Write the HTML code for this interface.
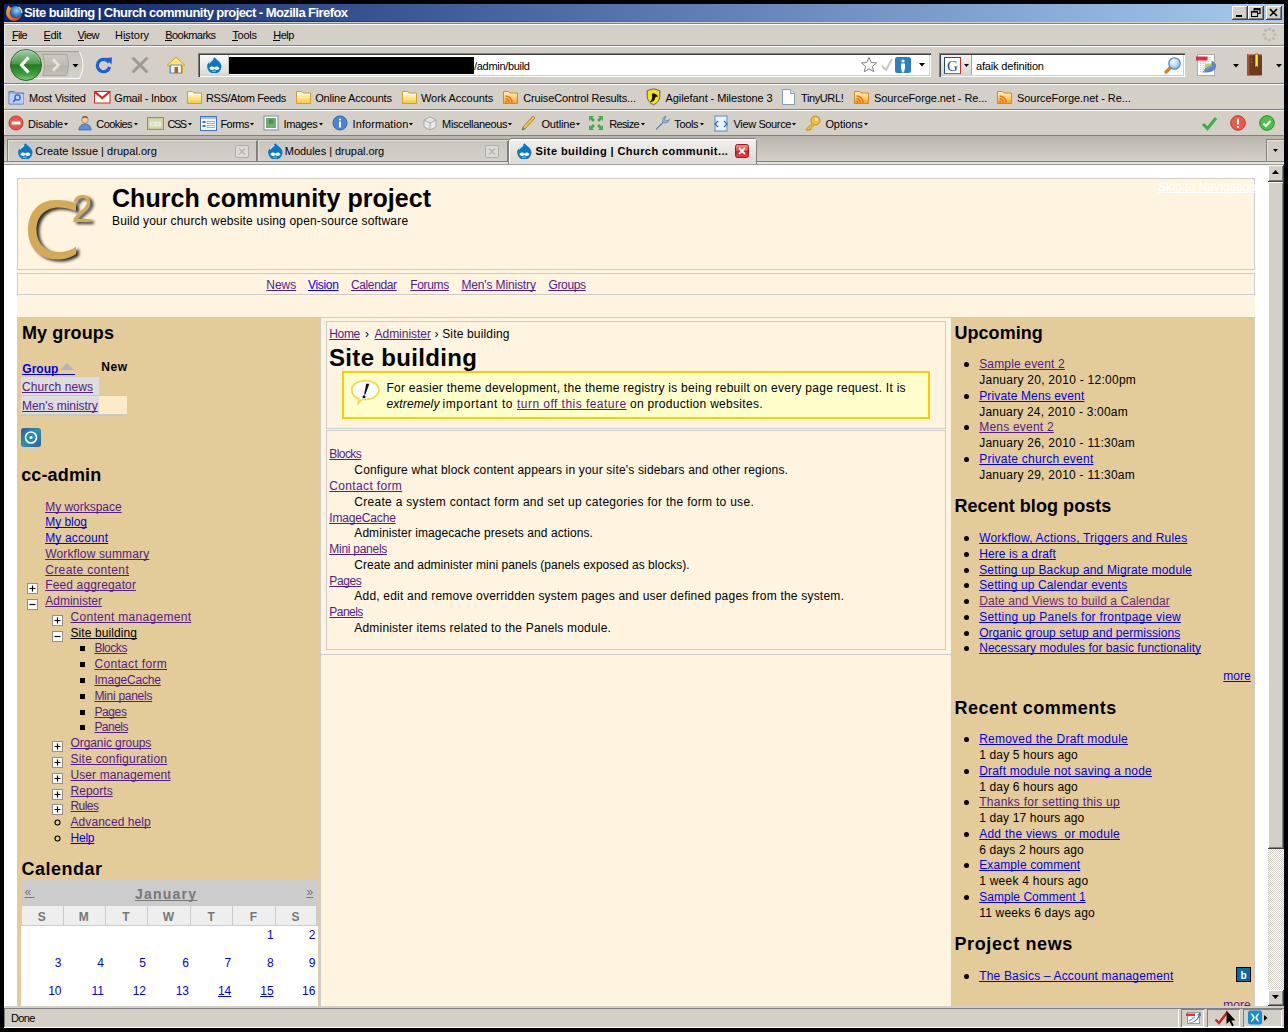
<!DOCTYPE html>
<html><head><meta charset="utf-8"><title>Site building | Church community project</title>
<style>
html,body{margin:0;padding:0;}
body{width:1288px;height:1032px;position:relative;overflow:hidden;background:#000;font-family:"Liberation Sans",sans-serif;}
.a{position:absolute;}
.t{white-space:nowrap;text-decoration-skip-ink:none;}
</style></head><body>
<div class="a" style="left:4px;top:4px;width:1280px;height:1024px;background:#d4d0c8;"></div>
<div class="a" style="left:4px;top:4px;width:1280px;height:18px;background:linear-gradient(to right,#0a246a,#a6caf0);"></div>
<div class="a" style="left:4px;top:21px;width:1280px;height:1px;background:linear-gradient(to right,rgba(0,10,80,.6),rgba(0,10,80,0) 60%);"></div>
<svg class="a" style="left:5px;top:4px;" width="18" height="18" viewBox="0 0 18 18">
<defs><radialGradient id="ffg" cx="60%" cy="35%" r="65%"><stop offset="0" stop-color="#9ad4ff"/><stop offset=".5" stop-color="#3a86d8"/><stop offset="1" stop-color="#17357e"/></radialGradient>
<linearGradient id="ffo" x1="0" y1="0" x2="1" y2="1"><stop offset="0" stop-color="#ffb030"/><stop offset=".55" stop-color="#f07010"/><stop offset="1" stop-color="#b8300a"/></linearGradient></defs>
<circle cx="10.3" cy="8.6" r="6.6" fill="url(#ffg)"/>
<path d="M3.3 1.5L6.6 4.6C5.2 6 4.6 7.4 4.8 9.2C5.2 12.4 7.8 14.3 10.8 14.1C13.3 13.9 15.4 12.2 16.6 9.8C16.3 13.7 13.3 16.9 9.4 16.9C4.9 16.9 1.2 13.3 1.2 8.8C1.2 6 2 3.6 3.3 1.5Z" fill="url(#ffo)"/>
<path d="M13.5 3.2C15.6 4.3 17 6.3 16.8 9" stroke="#ffd040" stroke-width="1.4" fill="none"/>
</svg>
<div class="a t" style="left:24px;top:6px;font-size:13px;line-height:13px;color:#fff;font-weight:bold;letter-spacing:-0.562px;">Site building | Church community project - Mozilla Firefox</div>
<div class="a" style="left:1232px;top:6px;width:16px;height:14px;background:#d4d0c8;box-shadow:inset -1px -1px #404040,inset 1px 1px #fff,inset -2px -2px #808080;box-sizing:border-box;"></div>
<div class="a" style="left:1248px;top:6px;width:16px;height:14px;background:#d4d0c8;box-shadow:inset -1px -1px #404040,inset 1px 1px #fff,inset -2px -2px #808080;box-sizing:border-box;"></div>
<div class="a" style="left:1266px;top:6px;width:16px;height:14px;background:#d4d0c8;box-shadow:inset -1px -1px #404040,inset 1px 1px #fff,inset -2px -2px #808080;box-sizing:border-box;"></div>
<div class="a" style="left:1236px;top:15px;width:6px;height:2px;background:#000;"></div>
<svg class="a" style="left:1251px;top:8px;" width="10" height="9" viewBox="0 0 10 9"><path d="M3 .5h6v5h-2M3 .5v2" stroke="#000" stroke-width="1.2" fill="none"/><rect x="3" y="1" width="6" height="1.2" fill="#000"/><rect x="0.5" y="3.5" width="6" height="5" fill="none" stroke="#000"/><rect x="0" y="3" width="7" height="1.6" fill="#000"/></svg>
<svg class="a" style="left:1269px;top:8px;" width="10" height="9" viewBox="0 0 10 9"><path d="M1 1L8 8M8 1L1 8" stroke="#000" stroke-width="1.6"/></svg>
<div class="a" style="left:4px;top:22px;width:1280px;height:1px;background:#d4d0c8;"></div>
<div class="a" style="left:4px;top:23px;width:1280px;height:1px;background:#808080;"></div>
<div class="a" style="left:4px;top:24px;width:1280px;height:1px;background:#fff;"></div>
<div class="a" style="left:4px;top:24px;width:1px;height:1004px;background:#ece9e2;"></div>
<div class="a t" style="left:12px;top:30px;font-size:11px;line-height:11px;color:#000;letter-spacing:-0.706px;">File</div>
<div class="a t" style="left:43.5px;top:30px;font-size:11px;line-height:11px;color:#000;letter-spacing:-0.290px;">Edit</div>
<div class="a t" style="left:77.5px;top:30px;font-size:11px;line-height:11px;color:#000;letter-spacing:-0.580px;">View</div>
<div class="a t" style="left:115px;top:30px;font-size:11px;line-height:11px;color:#000;letter-spacing:-0.036px;">History</div>
<div class="a t" style="left:165.2px;top:30px;font-size:11px;line-height:11px;color:#000;letter-spacing:-0.516px;">Bookmarks</div>
<div class="a t" style="left:232.3px;top:30px;font-size:11px;line-height:11px;color:#000;letter-spacing:-0.222px;">Tools</div>
<div class="a t" style="left:273.3px;top:30px;font-size:11px;line-height:11px;color:#000;letter-spacing:-0.508px;">Help</div>
<div class="a" style="left:12px;top:40px;width:5px;height:1px;background:#000;"></div>
<div class="a" style="left:44px;top:40px;width:6px;height:1px;background:#000;"></div>
<div class="a" style="left:78px;top:40px;width:6px;height:1px;background:#000;"></div>
<div class="a" style="left:124px;top:40px;width:5px;height:1px;background:#000;"></div>
<div class="a" style="left:165px;top:40px;width:7px;height:1px;background:#000;"></div>
<div class="a" style="left:232px;top:40px;width:6px;height:1px;background:#000;"></div>
<div class="a" style="left:273px;top:40px;width:7px;height:1px;background:#000;"></div>
<svg class="a" style="left:1262px;top:27px;" width="15" height="15" viewBox="0 0 15 15"><circle cx="13.10" cy="7.50" r="1.6" fill="#bdbab3"/><circle cx="11.46" cy="11.46" r="1.6" fill="#bdbab3"/><circle cx="7.50" cy="13.10" r="1.6" fill="#bdbab3"/><circle cx="3.54" cy="11.46" r="1.6" fill="#bdbab3"/><circle cx="1.90" cy="7.50" r="1.6" fill="#bdbab3"/><circle cx="3.54" cy="3.54" r="1.6" fill="#bdbab3"/><circle cx="7.50" cy="1.90" r="1.6" fill="#bdbab3"/><circle cx="11.46" cy="3.54" r="1.6" fill="#bdbab3"/></svg>
<div class="a" style="left:4px;top:45px;width:1280px;height:1px;background:#808080;"></div>
<div class="a" style="left:4px;top:46px;width:1280px;height:1px;background:#fff;"></div>
<svg class="a" style="left:6px;top:48px;" width="80" height="34" viewBox="0 0 80 34"><defs>
<linearGradient id="pc" x1="0" y1="0" x2="0" y2="1"><stop offset="0" stop-color="#c4c1b9"/><stop offset="1" stop-color="#d6d3cc"/></linearGradient>
<linearGradient id="fw" x1="0" y1="0" x2="0" y2="1"><stop offset="0" stop-color="#cbc8c1"/><stop offset=".5" stop-color="#c0bdb5"/><stop offset=".52" stop-color="#b6b3ab"/><stop offset="1" stop-color="#c3c0b8"/></linearGradient>
<linearGradient id="bkg" x1="0" y1="0" x2="0" y2="1"><stop offset="0" stop-color="#a8cfa8"/><stop offset=".45" stop-color="#4f9a4f"/><stop offset=".5" stop-color="#227a22"/><stop offset=".8" stop-color="#3f9f3f"/><stop offset="1" stop-color="#7fd07f"/></linearGradient>
</defs>
<path d="M11 3.5H73.5Q80.5 17 73.5 30.5H11Q2.5 17 11 3.5Z" fill="url(#pc)"/>
<path d="M11 3.5H73.5" stroke="#a3a098" stroke-width="1"/><path d="M11 3.5Q2.5 17 11 30.5" stroke="#b8b5ae" fill="none"/>
<path d="M11 30.5H73.5Q80.5 17 73.5 3.5" stroke="#fff" stroke-width="1" fill="none" opacity=".9"/>
<path d="M36.5 6.5H60.5Q64.5 17 60.5 27.5H36.5Q40.5 17 36.5 6.5Z" fill="url(#fw)" stroke="#a9a69e" stroke-width="1"/>
<path d="M47 11.5L52.5 17L47 22.5" stroke="#e8e6e1" stroke-width="2.6" fill="none"/>
<path d="M66.5 16h6L69.5 19.5z" fill="#000"/>
<circle cx="20" cy="17" r="15.5" fill="url(#bkg)" stroke="#2a6a2a" stroke-width="1"/>
<path d="M6 13A14.5 14.5 0 0 1 34 13" stroke="#fff" stroke-width="1" fill="none" opacity=".25"/>
<path d="M22.5 9.5L15.5 17L22.5 24.5" stroke="#fff" stroke-width="3.2" fill="none"/>
</svg>
<svg class="a" style="left:95px;top:56px;" width="18" height="18" viewBox="0 0 18 18"><path d="M14 6.5 A6.2 6.2 0 1 0 14.6 11" stroke="#1a5fd6" stroke-width="3.2" fill="none"/>
<path d="M10.5 2 L17 1.5 L16.5 8.5 Z" fill="#1a5fd6"/></svg>
<svg class="a" style="left:131px;top:56px;" width="18" height="18" viewBox="0 0 18 18"><path d="M2.5 2.5L15.5 15.5M15.5 2.5L2.5 15.5" stroke="#9c9a95" stroke-width="3" stroke-linecap="round"/></svg>
<svg class="a" style="left:166px;top:56px;" width="20" height="18" viewBox="0 0 20 18"><path d="M10 1L1 9.5h2.5V17h13V9.5H19Z" fill="#fbe27a" stroke="#d7a318" stroke-width="1"/>
<rect x="4.5" y="9" width="11" height="8" fill="#eaf3fb" stroke="#7b8fae" stroke-width="1"/>
<rect x="8.5" y="11" width="3.5" height="6" fill="#a5622b"/></svg>
<div class="a" style="left:198px;top:53px;width:733px;height:24px;background:#fff;box-shadow:inset 1px 1px #808080,inset 2px 2px #404040,inset -1px -1px #fff,inset -2px -2px #d4d0c8;box-sizing:border-box;"></div>
<div class="a" style="left:200px;top:55px;width:29px;height:20px;background:linear-gradient(#fafafa,#dcdad5);border-right:1px solid #c5c2bb;box-sizing:border-box;"></div>
<svg class="a" style="left:206px;top:57px;" width="16" height="16" viewBox="0 0 16 16"><path d="M8.5 .3C9.8 2.6 15.5 4.8 15.5 9.6A7.2 6.9 0 0 1 1.1 9.6C1.1 4.8 7 2.6 8.5 .3Z" fill="#0a78c2"/>
<path d="M3 6.2C4 4.3 6 3 7.2 2.2" stroke="#fff" stroke-width="1.3" fill="none" opacity=".9"/>
<path d="M3.3 11.2C4.5 9 6.8 9 8.3 10.6C9.8 9 12.2 9 13.5 11.2C12.3 13.4 10 13.3 8.3 11.9C6.6 13.3 4.5 13.4 3.3 11.2Z" fill="#fff"/>
<path d="M6 14.2h4" stroke="#fff" stroke-width=".8" opacity=".7"/></svg>
<div class="a" style="left:229px;top:57px;width:245px;height:17px;background:#000;"></div>
<div class="a t" style="left:474px;top:61px;font-size:11px;line-height:11px;color:#000;letter-spacing:-0.304px;">/admin/build</div>
<svg class="a" style="left:860px;top:56px;" width="18" height="17" viewBox="0 0 18 17"><path d="M9 1.5l2.2 5 5.3.4-4.1 3.5 1.3 5.3L9 12.9l-4.7 2.8 1.3-5.3L1.5 6.9l5.3-.4Z" fill="#fff" stroke="#808080" stroke-width="1"/></svg>
<svg class="a" style="left:880px;top:57px;" width="14" height="16" viewBox="0 0 14 16"><path d="M2 9l4 4 6-11" stroke="#c8c8c8" stroke-width="2" fill="none"/></svg>
<svg class="a" style="left:895px;top:57px;" width="16" height="16" viewBox="0 0 16 16"><rect x="0" y="0" width="16" height="16" rx="2.5" fill="#2a7ec4"/><circle cx="8" cy="4" r="1.6" fill="#fff"/><path d="M6 6.5h4v4.5l-1 4.5h-2l-1-4.5Z" fill="#fff"/></svg>
<svg class="a" style="left:919px;top:63px;" width="6" height="4" viewBox="0 0 6 4"><path d="M0 0h6L3 3.5z" fill="#000"/></svg>
<div class="a" style="left:939px;top:53px;width:246px;height:24px;background:#fff;box-shadow:inset 1px 1px #808080,inset 2px 2px #404040,inset -1px -1px #fff,inset -2px -2px #d4d0c8;box-sizing:border-box;"></div>
<div class="a" style="left:941px;top:55px;width:31px;height:20px;background:linear-gradient(#f4f3f0,#d9d6cf);border-right:1px solid #a9a69f;box-sizing:border-box;"></div>
<svg class="a" style="left:944px;top:57px;" width="17" height="17" viewBox="0 0 17 17"><rect x=".5" y=".5" width="16" height="16" fill="#fff" stroke="#1d47b5"/><path d="M16.5 .5v16h-16" stroke="#d82b20" fill="none"/><path d="M.5 16.5h16" stroke="#2ca02c"/><text x="8.5" y="13.5" font-family="Liberation Serif" font-size="15" fill="#1d47b5" text-anchor="middle">G</text></svg>
<svg class="a" style="left:964px;top:64px;" width="5" height="3" viewBox="0 0 5 3"><path d="M0 0h5L2.5 3z" fill="#000"/></svg>
<div class="a t" style="left:976px;top:61px;font-size:11px;line-height:11px;color:#000;letter-spacing:-0.158px;">afaik definition</div>
<svg class="a" style="left:1164px;top:56px;" width="18" height="18" viewBox="0 0 18 18"><defs><radialGradient id="mg" cx="40%" cy="35%" r="60%"><stop offset="0" stop-color="#fff"/><stop offset="1" stop-color="#8cc6f0"/></radialGradient></defs>
<path d="M7 11L2 16" stroke="#e07b20" stroke-width="3.2" stroke-linecap="round"/><circle cx="10.5" cy="7.5" r="5.7" fill="url(#mg)" stroke="#5a8fc0" stroke-width="1.3"/></svg>
<svg class="a" style="left:1195px;top:53px;" width="24" height="23" viewBox="0 0 24 23"><rect x="2.5" y="1.5" width="17" height="21" fill="#fff" stroke="#a8acb2"/>
<path d="M5 8.5h12M5 10.5h12M5 12.5h12M5 14.5h12M5 16.5h12M5 18.5h12M12 4.5h5M12 6.5h5" stroke="#a9c4e6" stroke-width=".9" stroke-dasharray="1 .6"/>
<rect x="1" y="3.5" width="11.5" height="4" fill="#e8283c"/>
<rect x="10" y="11" width="7" height="6" fill="#c6d83a"/>
<path d="M7.5 19.5C10 15 14 12.5 17 12.5c-.5-2-1-3 .2-4.5 2.5 1 4.3 3.3 3.8 6-1 3.5-4.5 5-7 5.2-2.2.2-4.5.3-6.5.3Z" fill="#5a84c4"/>
<path d="M9 19c2-3 5-5.5 8.5-5.5" stroke="#8fb0e0" stroke-width="1" fill="none"/></svg>
<svg class="a" style="left:1233px;top:64px;" width="6" height="4" viewBox="0 0 6 4"><path d="M0 0h6L3 3.5z" fill="#000"/></svg>
<svg class="a" style="left:1246px;top:53px;" width="17" height="23" viewBox="0 0 17 23"><rect x="1" y="1" width="15" height="21.5" rx="1" fill="#6e3a1c"/><rect x="1" y="1" width="2.5" height="21.5" fill="#9a5530"/><rect x="2" y="1" width="14" height="1.2" fill="#c08060"/>
<path d="M9 1v14l1.6-1.8L12.2 15V1Z" fill="#ffec3a" stroke="#3a2010" stroke-width=".6"/><circle cx="5.5" cy="6" r=".6" fill="#c09070"/><circle cx="5.5" cy="9" r=".6" fill="#c09070"/></svg>
<svg class="a" style="left:1276px;top:64px;" width="6" height="4" viewBox="0 0 6 4"><path d="M0 0h6L3 3.5z" fill="#000"/></svg>
<div class="a" style="left:4px;top:83px;width:1280px;height:1px;background:#808080;"></div>
<div class="a" style="left:4px;top:84px;width:1280px;height:1px;background:#fff;"></div>
<svg class="a" style="left:8px;top:89px;" width="17" height="16" viewBox="0 0 17 16"><path d="M1 2.5h5l1.5 1.5H15.5v11H1Z" fill="#8fb3f0" stroke="#4f78c8"/>
<path d="M1.5 5h14v9.5h-14Z" fill="#b8d0f8"/><circle cx="9.5" cy="8.5" r="2.6" fill="none" stroke="#3a5fb0" stroke-width="1.3"/><path d="M7.6 10.4L5 13" stroke="#3a5fb0" stroke-width="1.5"/></svg>
<div class="a t" style="left:29px;top:93px;font-size:11px;line-height:11px;color:#000;letter-spacing:-0.249px;">Most Visited</div>
<svg class="a" style="left:94px;top:90px;" width="17" height="14" viewBox="0 0 17 14"><rect x=".5" y="1.5" width="15.5" height="11.5" fill="#fff" stroke="#d22"/><path d="M1 2l7.2 6L15.5 2" stroke="#d22" stroke-width="2.2" fill="none"/></svg>
<div class="a t" style="left:114.3px;top:93px;font-size:11px;line-height:11px;color:#000;letter-spacing:-0.228px;">Gmail - Inbox</div>
<svg class="a" style="left:186px;top:89px;" width="17" height="17" viewBox="0 0 17 17"><defs><linearGradient id="fdg" x1="0" y1="0" x2="0" y2="1"><stop offset="0" stop-color="#fffbe0"/><stop offset=".5" stop-color="#ffe88a"/><stop offset="1" stop-color="#f4c840"/></linearGradient></defs>
<path d="M1.5 2.5h5l1.5 1.5h7.5v10.5H1.5Z" fill="url(#fdg)" stroke="#d19f2a" stroke-width="1"/>
<path d="M2 5.5h13" stroke="#fff" stroke-width="1" opacity=".8"/></svg>
<div class="a t" style="left:206px;top:93px;font-size:11px;line-height:11px;color:#000;letter-spacing:-0.364px;">RSS/Atom Feeds</div>
<svg class="a" style="left:295px;top:89px;" width="17" height="17" viewBox="0 0 17 17"><defs><linearGradient id="fdg" x1="0" y1="0" x2="0" y2="1"><stop offset="0" stop-color="#fffbe0"/><stop offset=".5" stop-color="#ffe88a"/><stop offset="1" stop-color="#f4c840"/></linearGradient></defs>
<path d="M1.5 2.5h5l1.5 1.5h7.5v10.5H1.5Z" fill="url(#fdg)" stroke="#d19f2a" stroke-width="1"/>
<path d="M2 5.5h13" stroke="#fff" stroke-width="1" opacity=".8"/></svg>
<div class="a t" style="left:315.2px;top:93px;font-size:11px;line-height:11px;color:#000;letter-spacing:-0.196px;">Online Accounts</div>
<svg class="a" style="left:401px;top:89px;" width="17" height="17" viewBox="0 0 17 17"><defs><linearGradient id="fdg" x1="0" y1="0" x2="0" y2="1"><stop offset="0" stop-color="#fffbe0"/><stop offset=".5" stop-color="#ffe88a"/><stop offset="1" stop-color="#f4c840"/></linearGradient></defs>
<path d="M1.5 2.5h5l1.5 1.5h7.5v10.5H1.5Z" fill="url(#fdg)" stroke="#d19f2a" stroke-width="1"/>
<path d="M2 5.5h13" stroke="#fff" stroke-width="1" opacity=".8"/></svg>
<div class="a t" style="left:421px;top:93px;font-size:11px;line-height:11px;color:#000;letter-spacing:-0.082px;">Work Accounts</div>
<svg class="a" style="left:502px;top:89px;" width="17" height="17" viewBox="0 0 17 17"><defs><linearGradient id="rsg" x1="0" y1="0" x2="0" y2="1"><stop offset="0" stop-color="#fff0c0"/><stop offset=".5" stop-color="#ffd070"/><stop offset="1" stop-color="#f0a030"/></linearGradient></defs>
<path d="M1.5 2.5h5l1.5 1.5h7.5v10.5H1.5Z" fill="url(#rsg)" stroke="#d08a20" stroke-width="1"/>
<path d="M3.5 7a6.5 6.5 0 0 1 6.5 6.5M3.5 9.8a3.7 3.7 0 0 1 3.7 3.7" stroke="#e8741a" stroke-width="1.5" fill="none"/><circle cx="4.2" cy="12.8" r="1.1" fill="#e8741a"/></svg>
<div class="a t" style="left:523.3px;top:93px;font-size:11px;line-height:11px;color:#000;letter-spacing:-0.152px;">CruiseControl Results...</div>
<svg class="a" style="left:780px;top:89px;" width="17" height="17" viewBox="0 0 17 17"><path d="M2.5 .5h8l4 4v11h-12Z" fill="#fff" stroke="#7f9db9"/><path d="M10.5 .5v4h4" fill="#dfe8f5" stroke="#7f9db9"/></svg>
<div class="a t" style="left:801px;top:93px;font-size:11px;line-height:11px;color:#000;letter-spacing:-0.391px;">TinyURL!</div>
<svg class="a" style="left:853px;top:89px;" width="17" height="17" viewBox="0 0 17 17"><defs><linearGradient id="rsg" x1="0" y1="0" x2="0" y2="1"><stop offset="0" stop-color="#fff0c0"/><stop offset=".5" stop-color="#ffd070"/><stop offset="1" stop-color="#f0a030"/></linearGradient></defs>
<path d="M1.5 2.5h5l1.5 1.5h7.5v10.5H1.5Z" fill="url(#rsg)" stroke="#d08a20" stroke-width="1"/>
<path d="M3.5 7a6.5 6.5 0 0 1 6.5 6.5M3.5 9.8a3.7 3.7 0 0 1 3.7 3.7" stroke="#e8741a" stroke-width="1.5" fill="none"/><circle cx="4.2" cy="12.8" r="1.1" fill="#e8741a"/></svg>
<div class="a t" style="left:874px;top:93px;font-size:11px;line-height:11px;color:#000;letter-spacing:-0.070px;">SourceForge.net - Re...</div>
<svg class="a" style="left:996px;top:89px;" width="17" height="17" viewBox="0 0 17 17"><defs><linearGradient id="rsg" x1="0" y1="0" x2="0" y2="1"><stop offset="0" stop-color="#fff0c0"/><stop offset=".5" stop-color="#ffd070"/><stop offset="1" stop-color="#f0a030"/></linearGradient></defs>
<path d="M1.5 2.5h5l1.5 1.5h7.5v10.5H1.5Z" fill="url(#rsg)" stroke="#d08a20" stroke-width="1"/>
<path d="M3.5 7a6.5 6.5 0 0 1 6.5 6.5M3.5 9.8a3.7 3.7 0 0 1 3.7 3.7" stroke="#e8741a" stroke-width="1.5" fill="none"/><circle cx="4.2" cy="12.8" r="1.1" fill="#e8741a"/></svg>
<div class="a t" style="left:1017px;top:93px;font-size:11px;line-height:11px;color:#000;letter-spacing:-0.047px;">SourceForge.net - Re...</div>
<svg class="a" style="left:646px;top:88px;" width="15" height="18" viewBox="0 0 15 18"><path d="M7.5 .8L13.8 2.6V8.2C13.8 12.3 10.8 15.3 7.5 16.8 4.2 15.3 1.2 12.3 1.2 8.2V2.6Z" fill="#f2e21e" stroke="#5a5a5a" stroke-width="1"/><path d="M3.8 14C6.3 12 6.8 8.8 5.8 5.8 8.6 5 11.4 6.3 12 9 10.4 8.4 9.2 9 9 10.6 8.8 12.6 6.8 14.2 3.8 14Z" fill="#111"/></svg>
<div class="a t" style="left:665.5px;top:93px;font-size:11px;line-height:11px;color:#000;letter-spacing:-0.078px;">Agilefant - Milestone 3</div>
<div class="a" style="left:4px;top:109px;width:1280px;height:1px;background:#808080;"></div>
<div class="a" style="left:4px;top:110px;width:1280px;height:1px;background:#fff;"></div>
<svg class="a" style="left:8px;top:115px;" width="17" height="17" viewBox="0 0 17 17"><circle cx="8" cy="8" r="7" fill="#e8584a" stroke="#b83a2e"/><rect x="3.5" y="6.5" width="9" height="3" fill="#fff"/></svg>
<div class="a t" style="left:28px;top:119px;font-size:11px;line-height:11px;color:#000;letter-spacing:-0.248px;">Disable</div>
<svg class="a" style="left:64px;top:123px;" width="4" height="3" viewBox="0 0 4 3"><path d="M0 0h4L2 2.5z" fill="#000"/></svg>
<svg class="a" style="left:77px;top:115px;" width="17" height="17" viewBox="0 0 17 17"><circle cx="8" cy="5" r="3.3" fill="#f5c9a0" stroke="#b07a50" stroke-width=".8"/><path d="M2 15c0-4 2.5-6 6-6s6 2 6 6Z" fill="#5b8fd8" stroke="#3a67b0" stroke-width=".8"/><path d="M4.7 3.5C5 1.5 7 1 8 1s3 .5 3.3 2.5C10 2.5 6 2.5 4.7 3.5Z" fill="#8a5a30"/></svg>
<div class="a t" style="left:96.3px;top:119px;font-size:11px;line-height:11px;color:#000;letter-spacing:-0.575px;">Cookies</div>
<svg class="a" style="left:134px;top:123px;" width="4" height="3" viewBox="0 0 4 3"><path d="M0 0h4L2 2.5z" fill="#000"/></svg>
<svg class="a" style="left:147px;top:115px;" width="17" height="17" viewBox="0 0 17 17"><rect x=".5" y="2.5" width="16" height="12" fill="#c9cd9c" stroke="#8e9560"/><rect x="2" y="4" width="13" height="9" fill="#d6dab0"/><text x="8.5" y="11.3" font-size="7.5" fill="#fff" text-anchor="middle" font-family="Liberation Sans">css</text></svg>
<div class="a t" style="left:167.4px;top:119px;font-size:11px;line-height:11px;color:#000;letter-spacing:-1.412px;">CSS</div>
<svg class="a" style="left:188px;top:123px;" width="4" height="3" viewBox="0 0 4 3"><path d="M0 0h4L2 2.5z" fill="#000"/></svg>
<svg class="a" style="left:200px;top:115px;" width="17" height="17" viewBox="0 0 17 17"><rect x=".5" y="1.5" width="16" height="14" fill="#fff" stroke="#3f72c8"/><rect x="1" y="2" width="15" height="2" fill="#9cc0f0"/><rect x="2.5" y="6" width="3" height="2" fill="#3f72c8"/><rect x="2.5" y="10" width="3" height="2" fill="#3f72c8"/><path d="M7 6.5h7.5v2H7zM7 10.5h7.5v2H7z" fill="none" stroke="#7fa0d0" stroke-width=".8"/></svg>
<div class="a t" style="left:220.4px;top:119px;font-size:11px;line-height:11px;color:#000;letter-spacing:-0.539px;">Forms</div>
<svg class="a" style="left:250px;top:123px;" width="4" height="3" viewBox="0 0 4 3"><path d="M0 0h4L2 2.5z" fill="#000"/></svg>
<svg class="a" style="left:263px;top:115px;" width="17" height="17" viewBox="0 0 17 17"><rect x="1" y="1" width="14" height="14" fill="#fff" stroke="#7f8aa0"/><rect x="3" y="3" width="10" height="10" fill="#6cb06c"/><circle cx="8" cy="6.5" r="2.5" fill="#4f8f4f"/></svg>
<div class="a t" style="left:283.6px;top:119px;font-size:11px;line-height:11px;color:#000;letter-spacing:-0.399px;">Images</div>
<svg class="a" style="left:319px;top:123px;" width="4" height="3" viewBox="0 0 4 3"><path d="M0 0h4L2 2.5z" fill="#000"/></svg>
<svg class="a" style="left:332px;top:115px;" width="17" height="17" viewBox="0 0 17 17"><circle cx="8" cy="8" r="7" fill="#4a86d0" stroke="#2f64b0"/><circle cx="8" cy="4.5" r="1.1" fill="#fff"/><rect x="7" y="6.5" width="2" height="6" fill="#fff"/></svg>
<div class="a t" style="left:352.6px;top:119px;font-size:11px;line-height:11px;color:#000;letter-spacing:0.064px;">Information</div>
<svg class="a" style="left:409px;top:123px;" width="4" height="3" viewBox="0 0 4 3"><path d="M0 0h4L2 2.5z" fill="#000"/></svg>
<svg class="a" style="left:422px;top:115px;" width="17" height="17" viewBox="0 0 17 17"><path d="M2 5l6-3 6 3v7l-6 3-6-3Z" fill="#e8e8e8" stroke="#a8a8a8"/><path d="M2 5l6 3 6-3M8 8v7" stroke="#a8a8a8" fill="none"/></svg>
<div class="a t" style="left:442.1px;top:119px;font-size:11px;line-height:11px;color:#000;letter-spacing:-0.360px;">Miscellaneous</div>
<svg class="a" style="left:508px;top:123px;" width="4" height="3" viewBox="0 0 4 3"><path d="M0 0h4L2 2.5z" fill="#000"/></svg>
<svg class="a" style="left:521px;top:115px;" width="17" height="17" viewBox="0 0 17 17"><path d="M1 15l3-1 10-11-2-2L2 12Z" fill="#f0c040" stroke="#a07820" stroke-width=".8"/><path d="M1 15l3-1-2-2Z" fill="#5a6ad0"/></svg>
<div class="a t" style="left:541.4px;top:119px;font-size:11px;line-height:11px;color:#000;letter-spacing:-0.146px;">Outline</div>
<svg class="a" style="left:576px;top:123px;" width="4" height="3" viewBox="0 0 4 3"><path d="M0 0h4L2 2.5z" fill="#000"/></svg>
<svg class="a" style="left:588px;top:115px;" width="17" height="17" viewBox="0 0 17 17"><path d="M1 1h5L4.5 2.5 7 5 5 7 2.5 4.5 1 6ZM15 15h-5l1.5-1.5L9 11l2-2 2.5 2.5L15 10ZM15 1v5l-1.5-1.5L11 7 9 5l2.5-2.5L10 1ZM1 15v-5l1.5 1.5L5 9l2 2-2.5 2.5L6 15Z" fill="#3fae4a"/></svg>
<div class="a t" style="left:609.3px;top:119px;font-size:11px;line-height:11px;color:#000;letter-spacing:-0.665px;">Resize</div>
<svg class="a" style="left:641px;top:123px;" width="4" height="3" viewBox="0 0 4 3"><path d="M0 0h4L2 2.5z" fill="#000"/></svg>
<svg class="a" style="left:654px;top:115px;" width="17" height="17" viewBox="0 0 17 17"><path d="M2 14l7-7c-1-2 0-5 3-6l-1.5 3 2 2 3-1.5c-1 3-4 4-6 3l-7 7Z" fill="#8fb4e0" stroke="#5a80b0" stroke-width=".8"/></svg>
<div class="a t" style="left:674.3px;top:119px;font-size:11px;line-height:11px;color:#000;letter-spacing:-0.347px;">Tools</div>
<svg class="a" style="left:700px;top:123px;" width="4" height="3" viewBox="0 0 4 3"><path d="M0 0h4L2 2.5z" fill="#000"/></svg>
<svg class="a" style="left:713px;top:115px;" width="17" height="17" viewBox="0 0 17 17"><rect x="2" y="1" width="12" height="15" fill="#eaf2ff" stroke="#5a8ad8"/><path d="M5 6l-3 3 3 3M11 6l3 3-3 3" stroke="#2a6ad0" stroke-width="1.3" fill="none"/></svg>
<div class="a t" style="left:733.6px;top:119px;font-size:11px;line-height:11px;color:#000;letter-spacing:-0.378px;">View Source</div>
<svg class="a" style="left:792px;top:123px;" width="4" height="3" viewBox="0 0 4 3"><path d="M0 0h4L2 2.5z" fill="#000"/></svg>
<svg class="a" style="left:805px;top:115px;" width="17" height="17" viewBox="0 0 17 17"><circle cx="10.5" cy="5.5" r="4.5" fill="#f4c030" stroke="#b08010" stroke-width=".8"/><path d="M7.5 8L1 14.5l1.5 1.5 1.5-1.5 1 1 1.5-1.5-1-1L9 10" fill="#f4c030" stroke="#b08010" stroke-width=".8"/><circle cx="11.5" cy="4.5" r="1.2" fill="#fff"/></svg>
<div class="a t" style="left:825.4px;top:119px;font-size:11px;line-height:11px;color:#000;letter-spacing:-0.073px;">Options</div>
<svg class="a" style="left:864px;top:123px;" width="4" height="3" viewBox="0 0 4 3"><path d="M0 0h4L2 2.5z" fill="#000"/></svg>
<svg class="a" style="left:1201px;top:115px;" width="17" height="17" viewBox="0 0 17 17"><path d="M2 9l4.5 4.5L15 3" stroke="#3fae3f" stroke-width="3" fill="none"/></svg>
<svg class="a" style="left:1230px;top:115px;" width="17" height="17" viewBox="0 0 17 17"><circle cx="8" cy="8" r="7.3" fill="#e85a4a" stroke="#c03a2a"/><rect x="7" y="3.5" width="2" height="6" fill="#fff"/><rect x="7" y="11" width="2" height="2" fill="#fff"/></svg>
<svg class="a" style="left:1259px;top:115px;" width="17" height="17" viewBox="0 0 17 17"><circle cx="8" cy="8" r="7.3" fill="#4fbf4f" stroke="#2a8a2a"/><path d="M4.5 8.5l2.5 2.5 4.5-5" stroke="#fff" stroke-width="2" fill="none"/></svg>
<div class="a" style="left:4px;top:135px;width:1280px;height:1px;background:#808080;"></div>
<div class="a" style="left:4px;top:136px;width:1280px;height:25px;background:linear-gradient(#b9b5ac,#d4d0c8);"></div>
<div class="a" style="left:7px;top:139px;width:250px;height:22px;background:linear-gradient(#c9c6bf,#d3d0c9);box-shadow:inset 1px 1px #808080,inset 2px 2px #e2e0da,inset -1px 0 #808080;box-sizing:border-box;"></div>
<div class="a" style="left:257px;top:139px;width:251px;height:22px;background:linear-gradient(#c9c6bf,#d3d0c9);box-shadow:inset 1px 1px #808080,inset 2px 2px #e2e0da,inset -1px 0 #808080;box-sizing:border-box;"></div>
<div class="a" style="left:4px;top:161px;width:1280px;height:1px;background:#808080;"></div>
<div class="a" style="left:4px;top:162px;width:1280px;height:2px;background:#e6e3dc;"></div>
<div class="a" style="left:4px;top:164px;width:1280px;height:1px;background:#9d9a93;"></div>
<div class="a" style="left:508px;top:138px;width:249px;height:26px;background:linear-gradient(#f2f1ed,#dcd9d2);box-shadow:inset 1px 1px #808080,inset 2px 2px #fff,inset -1px 0 #808080;box-sizing:border-box;border-radius:3px 3px 0 0;"></div>
<div class="a" style="left:509px;top:163px;width:247px;height:1px;background:#e6e3dc;"></div>
<div class="a" style="left:508px;top:164px;width:249px;height:1px;background:#9d9a93;"></div>
<svg class="a" style="left:17px;top:143px;" width="16" height="16" viewBox="0 0 16 16"><path d="M8.5 .3C9.8 2.6 15.5 4.8 15.5 9.6A7.2 6.9 0 0 1 1.1 9.6C1.1 4.8 7 2.6 8.5 .3Z" fill="#0a78c2"/>
<path d="M3 6.2C4 4.3 6 3 7.2 2.2" stroke="#fff" stroke-width="1.3" fill="none" opacity=".9"/>
<path d="M3.3 11.2C4.5 9 6.8 9 8.3 10.6C9.8 9 12.2 9 13.5 11.2C12.3 13.4 10 13.3 8.3 11.9C6.6 13.3 4.5 13.4 3.3 11.2Z" fill="#fff"/>
<path d="M6 14.2h4" stroke="#fff" stroke-width=".8" opacity=".7"/></svg>
<div class="a t" style="left:35.3px;top:146px;font-size:11px;line-height:11px;color:#000;letter-spacing:0.031px;">Create Issue | drupal.org</div>
<svg class="a" style="left:235px;top:145px;" width="14" height="13" viewBox="0 0 14 13"><rect x=".5" y=".5" width="13" height="12" rx="1.5" fill="#dcdad4" stroke="#b0ada6"/><path d="M4 3.5l6 6M10 3.5l-6 6" stroke="#b8b5ae" stroke-width="1.4"/></svg>
<svg class="a" style="left:267px;top:143px;" width="16" height="16" viewBox="0 0 16 16"><path d="M8.5 .3C9.8 2.6 15.5 4.8 15.5 9.6A7.2 6.9 0 0 1 1.1 9.6C1.1 4.8 7 2.6 8.5 .3Z" fill="#0a78c2"/>
<path d="M3 6.2C4 4.3 6 3 7.2 2.2" stroke="#fff" stroke-width="1.3" fill="none" opacity=".9"/>
<path d="M3.3 11.2C4.5 9 6.8 9 8.3 10.6C9.8 9 12.2 9 13.5 11.2C12.3 13.4 10 13.3 8.3 11.9C6.6 13.3 4.5 13.4 3.3 11.2Z" fill="#fff"/>
<path d="M6 14.2h4" stroke="#fff" stroke-width=".8" opacity=".7"/></svg>
<div class="a t" style="left:284.8px;top:146px;font-size:11px;line-height:11px;color:#000;letter-spacing:-0.034px;">Modules | drupal.org</div>
<svg class="a" style="left:485px;top:145px;" width="14" height="13" viewBox="0 0 14 13"><rect x=".5" y=".5" width="13" height="12" rx="1.5" fill="#dcdad4" stroke="#b0ada6"/><path d="M4 3.5l6 6M10 3.5l-6 6" stroke="#b8b5ae" stroke-width="1.4"/></svg>
<svg class="a" style="left:516px;top:143px;" width="16" height="16" viewBox="0 0 16 16"><path d="M8.5 .3C9.8 2.6 15.5 4.8 15.5 9.6A7.2 6.9 0 0 1 1.1 9.6C1.1 4.8 7 2.6 8.5 .3Z" fill="#0a78c2"/>
<path d="M3 6.2C4 4.3 6 3 7.2 2.2" stroke="#fff" stroke-width="1.3" fill="none" opacity=".9"/>
<path d="M3.3 11.2C4.5 9 6.8 9 8.3 10.6C9.8 9 12.2 9 13.5 11.2C12.3 13.4 10 13.3 8.3 11.9C6.6 13.3 4.5 13.4 3.3 11.2Z" fill="#fff"/>
<path d="M6 14.2h4" stroke="#fff" stroke-width=".8" opacity=".7"/></svg>
<div class="a t" style="left:535.6px;top:146px;font-size:11px;line-height:11px;color:#000;font-weight:bold;letter-spacing:0.420px;">Site building | Church communit...</div>
<svg class="a" style="left:735px;top:144px;" width="14" height="14" viewBox="0 0 14 14"><defs><linearGradient id="rcg" x1="0" y1="0" x2="0" y2="1"><stop offset="0" stop-color="#ff8a8a"/><stop offset=".45" stop-color="#e85050"/><stop offset=".5" stop-color="#d42020"/><stop offset="1" stop-color="#e84040"/></linearGradient></defs><rect x=".5" y=".5" width="13" height="13" rx="2" fill="url(#rcg)" stroke="#a01818"/><path d="M4 4l6 6M10 4l-6 6" stroke="#fff" stroke-width="1.8"/></svg>
<div class="a" style="left:1266px;top:139px;width:18px;height:22px;background:linear-gradient(#ccc9c2,#d4d0c8);box-shadow:inset 1px 1px #808080,inset 2px 2px #e6e3dc;box-sizing:border-box;"></div>
<svg class="a" style="left:1273px;top:149px;" width="5" height="3" viewBox="0 0 5 3"><path d="M0 0h5L2.5 3z" fill="#000"/></svg>
<div class="a" style="left:4px;top:1006px;width:1280px;height:22px;background:#d4d0c8;"></div>
<div class="a" style="left:4px;top:1008px;width:1280px;height:1px;background:#808080;"></div>
<div class="a" style="left:4px;top:1027px;width:1280px;height:1px;background:#fff;"></div>
<div class="a" style="left:4px;top:1009px;width:1px;height:18px;background:#808080;"></div>
<div class="a t" style="left:11px;top:1013px;font-size:11px;line-height:11px;color:#000;letter-spacing:-0.604px;">Done</div>
<div class="a" style="left:1178px;top:1009px;width:1px;height:18px;background:#fff;"></div>
<div class="a" style="left:1181px;top:1009px;width:23px;height:18px;background:transparent;box-shadow:inset 1px 1px #808080,inset -1px -1px #fff;box-sizing:border-box;"></div>
<div class="a" style="left:1207px;top:1009px;width:33px;height:18px;background:transparent;box-shadow:inset 1px 1px #808080,inset -1px -1px #fff;box-sizing:border-box;"></div>
<div class="a" style="left:1243px;top:1009px;width:39px;height:18px;background:transparent;box-shadow:inset 1px 1px #808080,inset -1px -1px #fff;box-sizing:border-box;"></div>
<svg class="a" style="left:1185px;top:1010px;" width="17" height="15" viewBox="0 0 17 15"><rect x="2.5" y="2.5" width="12" height="11" fill="#fff" stroke="#9a9a9a"/><rect x="1" y="3.5" width="9" height="2.6" fill="#e8303c"/><path d="M4 12.5C8 12.5 12 10 13.5 5.5L12 5l3.5-3 .5 4.5-1.3-.8C13.5 10 9.5 13 4 13Z" fill="#4a78c0"/><path d="M4 11l6-4" stroke="#6f9ad8" stroke-width="1.2"/></svg>
<svg class="a" style="left:1213px;top:1009px;" width="22" height="18" viewBox="0 0 22 18"><path d="M2.5 10.5l3.5 3.5 8.5-11" stroke="#d81c1c" stroke-width="2.4" fill="none"/><path d="M13.5 1.5v13.5l3-2.8 2.6 5 1.7-.9-2.5-4.9h4Z" fill="#000"/></svg>
<svg class="a" style="left:1247px;top:1010px;" width="23" height="16" viewBox="0 0 23 16"><rect x="1" y="0.5" width="14" height="14" rx="2.5" fill="#178ccf"/><path d="M3.5 3C6.5 4 7.2 6 7.7 7.5 7.2 9 6.5 11 3.5 12 4.5 10 5.2 8.8 6 7.5 5.2 6.2 4.5 5 3.5 3ZM12.5 3C9.5 4 8.8 6 8.3 7.5 8.8 9 9.5 11 12.5 12 11.5 10 10.8 8.8 10 7.5 10.8 6.2 11.5 5 12.5 3Z" fill="#fff"/><path d="M17 5l3.5 3-3.5 3z" fill="#000"/></svg>
<div class="a" style="left:4px;top:165px;width:1264px;height:841px;background:#fff;"></div>
<div class="a" style="left:1268px;top:165px;width:16px;height:841px;background:repeating-conic-gradient(#d4d0c8 0 25%,#fff 0 50%) 0 0/2px 2px;"></div>
<div class="a" style="left:1268px;top:165px;width:16px;height:17px;background:#d4d0c8;box-shadow:inset -1px -1px #404040,inset 1px 1px #fff,inset -2px -2px #808080,inset 2px 2px #d4d0c8;box-sizing:border-box;"></div>
<svg class="a" style="left:1272px;top:170px;" width="8" height="5" viewBox="0 0 8 5"><path d="M0 4h7L3.5 0z" fill="#000"/></svg>
<div class="a" style="left:1268px;top:182px;width:16px;height:667px;background:#d4d0c8;box-shadow:inset -1px -1px #404040,inset 1px 1px #fff,inset -2px -2px #808080,inset 2px 2px #d4d0c8;box-sizing:border-box;"></div>
<div class="a" style="left:1268px;top:990px;width:16px;height:16px;background:#d4d0c8;box-shadow:inset -1px -1px #404040,inset 1px 1px #fff,inset -2px -2px #808080,inset 2px 2px #d4d0c8;box-sizing:border-box;"></div>
<svg class="a" style="left:1272px;top:995px;" width="8" height="5" viewBox="0 0 8 5"><path d="M0 0h7L3.5 4z" fill="#000"/></svg>
<div class="a" style="left:0;top:0;width:1268px;height:1006px;overflow:hidden;">
<div class="a" style="left:17px;top:178px;width:1238px;height:828px;background:#fef4e0;"></div>
<div class="a" style="left:17px;top:178px;width:1238px;height:92px;background:#fef4e0;border:1px solid #cccccc;box-sizing:border-box;"></div>
<svg class="a" style="left:20px;top:185px;" width="90" height="83" viewBox="0 0 90 83"><g style="filter:drop-shadow(3px 2.5px 1.6px rgba(0,0,0,.8))">
<path d="M56,18.5 C49,15.8 43,15 36,15 C18,15 8,28 8,45 C8,63 20,74.5 37,74.5 C45,74.5 51,72.5 56,69 L56,61.5 C51,65.5 45,67 38.5,67 C25.5,67 16.5,58 16.5,45 C16.5,31 25.5,22.5 38.5,22.5 C45,22.5 50.5,24 56,26.5 Z" fill="#d4a957"/>
<text x="51.5" y="37.4" font-family="Liberation Sans" font-size="38" fill="#d4a957">2</text></g></svg>
<div class="a t" style="left:112px;top:186px;font-size:25px;line-height:25px;color:#000;font-weight:bold;letter-spacing:0.039px;">Church community project</div>
<div class="a t" style="left:112px;top:215px;font-size:12px;line-height:12px;color:#000;letter-spacing:0.168px;">Build your church website using open-source software</div>
<div class="a t" style="left:1158px;top:181px;font-size:12px;line-height:12px;color:#ffffff;letter-spacing:0.076px;text-decoration:underline;">Skip to Navigation</div>
<div class="a" style="left:17px;top:273px;width:1238px;height:22px;background:#fef4e0;border:1px solid #cccccc;box-sizing:border-box;"></div>
<div class="a t" style="left:266.3px;top:279px;font-size:12px;line-height:12px;color:#551a8b;letter-spacing:-0.039px;text-decoration:underline;">News</div>
<div class="a t" style="left:307.9px;top:279px;font-size:12px;line-height:12px;color:#0000ee;letter-spacing:-0.294px;text-decoration:underline;">Vision</div>
<div class="a t" style="left:351px;top:279px;font-size:12px;line-height:12px;color:#551a8b;letter-spacing:-0.386px;text-decoration:underline;">Calendar</div>
<div class="a t" style="left:410.3px;top:279px;font-size:12px;line-height:12px;color:#551a8b;letter-spacing:-0.354px;text-decoration:underline;">Forums</div>
<div class="a t" style="left:461.4px;top:279px;font-size:12px;line-height:12px;color:#551a8b;letter-spacing:-0.139px;text-decoration:underline;">Men&#x27;s Ministry</div>
<div class="a t" style="left:548.4px;top:279px;font-size:12px;line-height:12px;color:#551a8b;letter-spacing:-0.329px;text-decoration:underline;">Groups</div>
<div class="a" style="left:17px;top:317px;width:1238px;height:1px;background:#cccccc;"></div>
<div class="a" style="left:17px;top:318px;width:303px;height:688px;background:#e3cc9a;"></div>
<div class="a" style="left:17px;top:318px;width:1px;height:688px;background:#cccccc;"></div>
<div class="a" style="left:320px;top:318px;width:1px;height:688px;background:#cccccc;"></div>
<div class="a" style="left:951px;top:318px;width:1px;height:688px;background:#cccccc;"></div>
<div class="a" style="left:952px;top:318px;width:302px;height:688px;background:#e3cc9a;"></div>
<div class="a" style="left:1254px;top:318px;width:1px;height:688px;background:#cccccc;"></div>
<div class="a t" style="left:22px;top:324px;font-size:18px;line-height:18px;color:#000;font-weight:bold;letter-spacing:0.121px;">My groups</div>
<div class="a" style="left:21px;top:377px;width:78px;height:18px;background:#dddddd;"></div>
<div class="a" style="left:21px;top:395px;width:106px;height:1px;background:#c8c8c8;"></div>
<div class="a" style="left:21px;top:396px;width:78px;height:18px;background:#dddddd;"></div>
<div class="a" style="left:99px;top:396px;width:28px;height:18px;background:#fdebc8;"></div>
<div class="a" style="left:21px;top:414px;width:106px;height:2px;background:#c8c8c8;"></div>
<div class="a t" style="left:22.3px;top:363px;font-size:12px;line-height:12px;color:#0000ee;font-weight:bold;text-decoration:none;">Group</div>
<div class="a" style="left:22px;top:374px;width:53px;height:1px;background:#0000ee;"></div>
<svg class="a" style="left:60px;top:363px;" width="14" height="7" viewBox="0 0 14 7"><path d="M0 7L7 0l7 7z" fill="#b4b4b4"/></svg>
<div class="a t" style="left:101.2px;top:361px;font-size:12px;line-height:12px;color:#000;font-weight:bold;letter-spacing:0.564px;">New</div>
<div class="a t" style="left:22px;top:381px;font-size:12px;line-height:12px;color:#551a8b;letter-spacing:0.097px;text-decoration:underline;">Church news</div>
<div class="a t" style="left:22px;top:400px;font-size:12px;line-height:12px;color:#551a8b;letter-spacing:-0.039px;text-decoration:underline;">Men&#x27;s ministry</div>
<svg class="a" style="left:21px;top:428px;" width="20" height="19" viewBox="0 0 20 19"><defs><linearGradient id="fg" x1="0" y1="0" x2="1" y2="1"><stop offset="0" stop-color="#2a5fa8"/><stop offset=".5" stop-color="#2892b0"/><stop offset="1" stop-color="#2a5fa8"/></linearGradient></defs>
<rect x="0" y="0" width="20" height="19" rx="3" fill="url(#fg)"/><circle cx="10" cy="9.5" r="5.5" fill="none" stroke="#fff" stroke-width="1.6"/><circle cx="10" cy="9.5" r="1.6" fill="#fff"/></svg>
<div class="a t" style="left:21.2px;top:466px;font-size:18px;line-height:18px;color:#000;font-weight:bold;letter-spacing:0.136px;">cc-admin</div>
<div class="a t" style="left:45.2px;top:501px;font-size:12px;line-height:12px;color:#551a8b;letter-spacing:-0.017px;text-decoration:underline;">My workspace</div>
<div class="a t" style="left:45.2px;top:516px;font-size:12px;line-height:12px;color:#0000ee;letter-spacing:-0.036px;text-decoration:underline;">My blog</div>
<div class="a t" style="left:45.2px;top:532px;font-size:12px;line-height:12px;color:#0000ee;letter-spacing:0.162px;text-decoration:underline;">My account</div>
<div class="a t" style="left:45.2px;top:548px;font-size:12px;line-height:12px;color:#551a8b;letter-spacing:0.147px;text-decoration:underline;">Workflow summary</div>
<div class="a t" style="left:45.2px;top:564px;font-size:12px;line-height:12px;color:#551a8b;letter-spacing:0.370px;text-decoration:underline;">Create content</div>
<div class="a t" style="left:45.2px;top:579px;font-size:12px;line-height:12px;color:#551a8b;letter-spacing:0.143px;text-decoration:underline;">Feed aggregator</div>
<svg class="a" style="left:27px;top:583px;" width="11" height="11" viewBox="0 0 11 11"><rect x=".5" y=".5" width="10" height="10" fill="#fff" stroke="#919191"/><path d="M2.5 5.5h6M5.5 2.5v6" stroke="#000" stroke-width="1.2"/></svg>
<div class="a t" style="left:45.2px;top:595px;font-size:12px;line-height:12px;color:#551a8b;letter-spacing:0.012px;text-decoration:underline;">Administer</div>
<svg class="a" style="left:27px;top:599px;" width="11" height="11" viewBox="0 0 11 11"><rect x=".5" y=".5" width="10" height="10" fill="#fff" stroke="#919191"/><path d="M2.5 5.5h6" stroke="#000" stroke-width="1.2"/></svg>
<div class="a t" style="left:70.5px;top:611px;font-size:12px;line-height:12px;color:#551a8b;letter-spacing:0.301px;text-decoration:underline;">Content management</div>
<svg class="a" style="left:52px;top:615px;" width="11" height="11" viewBox="0 0 11 11"><rect x=".5" y=".5" width="10" height="10" fill="#fff" stroke="#919191"/><path d="M2.5 5.5h6M5.5 2.5v6" stroke="#000" stroke-width="1.2"/></svg>
<div class="a t" style="left:70.5px;top:627px;font-size:12px;line-height:12px;color:#000;letter-spacing:0.094px;text-decoration:underline;">Site building</div>
<svg class="a" style="left:52px;top:631px;" width="11" height="11" viewBox="0 0 11 11"><rect x=".5" y=".5" width="10" height="10" fill="#fff" stroke="#919191"/><path d="M2.5 5.5h6" stroke="#000" stroke-width="1.2"/></svg>
<div class="a t" style="left:94.4px;top:642px;font-size:12px;line-height:12px;color:#551a8b;letter-spacing:-0.469px;text-decoration:underline;">Blocks</div>
<div class="a" style="left:80px;top:646px;width:5px;height:5px;background:#000;"></div>
<div class="a t" style="left:94.4px;top:658px;font-size:12px;line-height:12px;color:#551a8b;letter-spacing:0.330px;text-decoration:underline;">Contact form</div>
<div class="a" style="left:80px;top:662px;width:5px;height:5px;background:#000;"></div>
<div class="a t" style="left:94.4px;top:674px;font-size:12px;line-height:12px;color:#551a8b;letter-spacing:-0.170px;text-decoration:underline;">ImageCache</div>
<div class="a" style="left:80px;top:678px;width:5px;height:5px;background:#000;"></div>
<div class="a t" style="left:94.4px;top:690px;font-size:12px;line-height:12px;color:#551a8b;letter-spacing:-0.270px;text-decoration:underline;">Mini panels</div>
<div class="a" style="left:80px;top:694px;width:5px;height:5px;background:#000;"></div>
<div class="a t" style="left:94.4px;top:706px;font-size:12px;line-height:12px;color:#551a8b;letter-spacing:-0.379px;text-decoration:underline;">Pages</div>
<div class="a" style="left:80px;top:710px;width:5px;height:5px;background:#000;"></div>
<div class="a t" style="left:94.4px;top:721px;font-size:12px;line-height:12px;color:#551a8b;letter-spacing:-0.537px;text-decoration:underline;">Panels</div>
<div class="a" style="left:80px;top:725px;width:5px;height:5px;background:#000;"></div>
<div class="a t" style="left:70.5px;top:737px;font-size:12px;line-height:12px;color:#551a8b;letter-spacing:-0.095px;text-decoration:underline;">Organic groups</div>
<svg class="a" style="left:52px;top:741px;" width="11" height="11" viewBox="0 0 11 11"><rect x=".5" y=".5" width="10" height="10" fill="#fff" stroke="#919191"/><path d="M2.5 5.5h6M5.5 2.5v6" stroke="#000" stroke-width="1.2"/></svg>
<div class="a t" style="left:70.5px;top:753px;font-size:12px;line-height:12px;color:#551a8b;letter-spacing:0.223px;text-decoration:underline;">Site configuration</div>
<svg class="a" style="left:52px;top:757px;" width="11" height="11" viewBox="0 0 11 11"><rect x=".5" y=".5" width="10" height="10" fill="#fff" stroke="#919191"/><path d="M2.5 5.5h6M5.5 2.5v6" stroke="#000" stroke-width="1.2"/></svg>
<div class="a t" style="left:70.5px;top:769px;font-size:12px;line-height:12px;color:#551a8b;letter-spacing:0.093px;text-decoration:underline;">User management</div>
<svg class="a" style="left:52px;top:773px;" width="11" height="11" viewBox="0 0 11 11"><rect x=".5" y=".5" width="10" height="10" fill="#fff" stroke="#919191"/><path d="M2.5 5.5h6M5.5 2.5v6" stroke="#000" stroke-width="1.2"/></svg>
<div class="a t" style="left:70.5px;top:785px;font-size:12px;line-height:12px;color:#551a8b;letter-spacing:0.031px;text-decoration:underline;">Reports</div>
<svg class="a" style="left:52px;top:789px;" width="11" height="11" viewBox="0 0 11 11"><rect x=".5" y=".5" width="10" height="10" fill="#fff" stroke="#919191"/><path d="M2.5 5.5h6M5.5 2.5v6" stroke="#000" stroke-width="1.2"/></svg>
<div class="a t" style="left:70.5px;top:800px;font-size:12px;line-height:12px;color:#551a8b;letter-spacing:-0.547px;text-decoration:underline;">Rules</div>
<svg class="a" style="left:52px;top:804px;" width="11" height="11" viewBox="0 0 11 11"><rect x=".5" y=".5" width="10" height="10" fill="#fff" stroke="#919191"/><path d="M2.5 5.5h6M5.5 2.5v6" stroke="#000" stroke-width="1.2"/></svg>
<div class="a t" style="left:70.5px;top:816px;font-size:12px;line-height:12px;color:#551a8b;letter-spacing:0.069px;text-decoration:underline;">Advanced help</div>
<svg class="a" style="left:54px;top:819px;" width="7" height="7" viewBox="0 0 7 7"><circle cx="3.5" cy="3.5" r="2.5" fill="none" stroke="#000" stroke-width="1.1"/></svg>
<div class="a t" style="left:70.5px;top:832px;font-size:12px;line-height:12px;color:#0000ee;letter-spacing:-0.229px;text-decoration:underline;">Help</div>
<svg class="a" style="left:54px;top:835px;" width="7" height="7" viewBox="0 0 7 7"><circle cx="3.5" cy="3.5" r="2.5" fill="none" stroke="#000" stroke-width="1.1"/></svg>
<div class="a t" style="left:21.5px;top:860px;font-size:18px;line-height:18px;color:#000;font-weight:bold;letter-spacing:0.493px;">Calendar</div>
<div class="a" style="left:21px;top:880px;width:297px;height:126px;background:#fff;"></div>
<div class="a" style="left:21px;top:880px;width:297px;height:26px;background:#cccccc;"></div>
<div class="a t" style="left:24.6px;top:886px;font-size:12px;line-height:12px;color:#777;text-decoration:underline;">« </div>
<div class="a t" style="left:135px;top:887px;font-size:14px;line-height:14px;color:#777;font-weight:bold;letter-spacing:1.221px;text-decoration:underline;">January</div>
<div class="a t" style="left:306.5px;top:886px;font-size:12px;line-height:12px;color:#777;text-decoration:underline;">»</div>
<div class="a" style="left:21px;top:906px;width:297px;height:20px;background:#cccccc;"></div>
<div class="a" style="left:22.0px;top:906px;width:40.5px;height:19px;background:#eeeeee;"></div>
<div class="a t" style="left:21.0px;top:910.84px;width:41.5px;text-align:center;font-size:12px;line-height:12px;font-weight:bold;color:#777;">S</div>
<div class="a" style="left:63.5px;top:906px;width:41.5px;height:19px;background:#eeeeee;"></div>
<div class="a t" style="left:62.5px;top:910.84px;width:42.5px;text-align:center;font-size:12px;line-height:12px;font-weight:bold;color:#777;">M</div>
<div class="a" style="left:106.0px;top:906px;width:41.0px;height:19px;background:#eeeeee;"></div>
<div class="a t" style="left:105.0px;top:910.84px;width:42.0px;text-align:center;font-size:12px;line-height:12px;font-weight:bold;color:#777;">T</div>
<div class="a" style="left:148.0px;top:906px;width:42.0px;height:19px;background:#eeeeee;"></div>
<div class="a t" style="left:147.0px;top:910.84px;width:43.0px;text-align:center;font-size:12px;line-height:12px;font-weight:bold;color:#777;">W</div>
<div class="a" style="left:191.0px;top:906px;width:41.3px;height:19px;background:#eeeeee;"></div>
<div class="a t" style="left:190.0px;top:910.84px;width:42.3px;text-align:center;font-size:12px;line-height:12px;font-weight:bold;color:#777;">T</div>
<div class="a" style="left:233.3px;top:906px;width:41.3px;height:19px;background:#eeeeee;"></div>
<div class="a t" style="left:232.3px;top:910.84px;width:42.3px;text-align:center;font-size:12px;line-height:12px;font-weight:bold;color:#777;">F</div>
<div class="a" style="left:275.6px;top:906px;width:40.8px;height:19px;background:#eeeeee;"></div>
<div class="a t" style="left:274.6px;top:910.84px;width:41.8px;text-align:center;font-size:12px;line-height:12px;font-weight:bold;color:#777;">S</div>
<div class="a" style="left:21px;top:925px;width:297px;height:1px;background:#cccccc;"></div>
<div class="a t" style="left:233.6px;top:928.84px;width:40px;text-align:right;font-size:12px;line-height:12px;color:#0000ee;">1</div>
<div class="a t" style="left:275.4px;top:928.84px;width:40px;text-align:right;font-size:12px;line-height:12px;color:#0000ee;">2</div>
<div class="a t" style="left:21.5px;top:956.84px;width:40px;text-align:right;font-size:12px;line-height:12px;color:#0000ee;">3</div>
<div class="a t" style="left:64.0px;top:956.84px;width:40px;text-align:right;font-size:12px;line-height:12px;color:#0000ee;">4</div>
<div class="a t" style="left:106.0px;top:956.84px;width:40px;text-align:right;font-size:12px;line-height:12px;color:#0000ee;">5</div>
<div class="a t" style="left:149.0px;top:956.84px;width:40px;text-align:right;font-size:12px;line-height:12px;color:#0000ee;">6</div>
<div class="a t" style="left:191.3px;top:956.84px;width:40px;text-align:right;font-size:12px;line-height:12px;color:#0000ee;">7</div>
<div class="a t" style="left:233.6px;top:956.84px;width:40px;text-align:right;font-size:12px;line-height:12px;color:#0000ee;">8</div>
<div class="a t" style="left:275.4px;top:956.84px;width:40px;text-align:right;font-size:12px;line-height:12px;color:#0000ee;">9</div>
<div class="a t" style="left:21.5px;top:984.84px;width:40px;text-align:right;font-size:12px;line-height:12px;color:#0000ee;">10</div>
<div class="a t" style="left:64.0px;top:984.84px;width:40px;text-align:right;font-size:12px;line-height:12px;color:#0000ee;">11</div>
<div class="a t" style="left:106.0px;top:984.84px;width:40px;text-align:right;font-size:12px;line-height:12px;color:#0000ee;">12</div>
<div class="a t" style="left:149.0px;top:984.84px;width:40px;text-align:right;font-size:12px;line-height:12px;color:#0000ee;">13</div>
<div class="a t" style="left:191.3px;top:984.84px;width:40px;text-align:right;font-size:12px;line-height:12px;color:#0000ee;text-decoration:underline;">14</div>
<div class="a t" style="left:233.6px;top:984.84px;width:40px;text-align:right;font-size:12px;line-height:12px;color:#0000ee;text-decoration:underline;">15</div>
<div class="a t" style="left:275.4px;top:984.84px;width:40px;text-align:right;font-size:12px;line-height:12px;color:#0000ee;">16</div>
<div class="a" style="left:326px;top:321px;width:620px;height:108px;background:#fef4e0;border:1px solid #cccccc;box-sizing:border-box;"></div>
<div class="a t" style="left:329.3px;top:328px;font-size:12px;line-height:12px;color:#551a8b;letter-spacing:-0.339px;text-decoration:underline;">Home</div>
<div class="a t" style="left:365px;top:328px;font-size:12px;line-height:12px;color:#000;">›</div>
<div class="a t" style="left:374.5px;top:328px;font-size:12px;line-height:12px;color:#551a8b;letter-spacing:-0.021px;text-decoration:underline;">Administer</div>
<div class="a t" style="left:434.5px;top:328px;font-size:12px;line-height:12px;color:#000;letter-spacing:0.164px;">› Site building</div>
<div class="a t" style="left:329px;top:346px;font-size:24px;line-height:24px;color:#000;font-weight:bold;letter-spacing:0.333px;">Site building</div>
<div class="a" style="left:342px;top:371px;width:588px;height:48px;background:#ffffcc;border:2px solid #ffcc00;box-sizing:border-box;"></div>
<svg class="a" style="left:350px;top:379px;" width="31" height="26" viewBox="0 0 31 26"><path d="M15.4 1.5C23.2 1.5 28.8 5.8 28.8 11S23.2 20.3 15.4 20.3c-1.6 0-2.8.2-4 .5L8.3 24.3 8.8 19.6C4.4 18.2 1.8 14.9 1.8 11 1.8 5.8 7.6 1.5 15.4 1.5Z" fill="#fff" stroke="#ffd24a" stroke-width="1.7"/>
<path d="M16.2 4.8h3.2l-4 10.8h-1.3Z" fill="#111"/><circle cx="14" cy="17.7" r="1.5" fill="#111"/></svg>
<div class="a t" style="left:386.4px;top:382px;font-size:12px;line-height:12px;color:#000;letter-spacing:0.268px;">For easier theme development, the theme registry is being rebuilt on every page request. It is</div>
<div class="a t" style="left:386.4px;top:398px;font-size:12px;line-height:12px;color:#000;font-style:italic;letter-spacing:0.123px;">extremely</div>
<div class="a t" style="left:442.5px;top:398px;font-size:12px;line-height:12px;color:#000;letter-spacing:0.605px;">important to</div>
<div class="a t" style="left:517px;top:398px;font-size:12px;line-height:12px;color:#551a8b;letter-spacing:0.461px;text-decoration:underline;">turn off this feature</div>
<div class="a t" style="left:630px;top:398px;font-size:12px;line-height:12px;color:#000;letter-spacing:0.293px;">on production websites.</div>
<div class="a" style="left:326px;top:430px;width:620px;height:220px;background:#fef4e0;border:1px solid #cccccc;box-sizing:border-box;"></div>
<div class="a t" style="left:329.3px;top:448px;font-size:12px;line-height:12px;color:#551a8b;letter-spacing:-0.569px;text-decoration:underline;">Blocks</div>
<div class="a t" style="left:354.3px;top:464px;font-size:12px;line-height:12px;color:#000;letter-spacing:0.176px;">Configure what block content appears in your site&#x27;s sidebars and other regions.</div>
<div class="a t" style="left:329.3px;top:480px;font-size:12px;line-height:12px;color:#551a8b;letter-spacing:0.348px;text-decoration:underline;">Contact form</div>
<div class="a t" style="left:354.3px;top:496px;font-size:12px;line-height:12px;color:#000;letter-spacing:0.294px;">Create a system contact form and set up categories for the form to use.</div>
<div class="a t" style="left:329.3px;top:512px;font-size:12px;line-height:12px;color:#551a8b;letter-spacing:-0.170px;text-decoration:underline;">ImageCache</div>
<div class="a t" style="left:354.3px;top:527px;font-size:12px;line-height:12px;color:#000;letter-spacing:0.075px;">Administer imagecache presets and actions.</div>
<div class="a t" style="left:329.3px;top:543px;font-size:12px;line-height:12px;color:#551a8b;letter-spacing:-0.270px;text-decoration:underline;">Mini panels</div>
<div class="a t" style="left:354.3px;top:559px;font-size:12px;line-height:12px;color:#000;letter-spacing:0.018px;">Create and administer mini panels (panels exposed as blocks).</div>
<div class="a t" style="left:329.3px;top:575px;font-size:12px;line-height:12px;color:#551a8b;letter-spacing:-0.379px;text-decoration:underline;">Pages</div>
<div class="a t" style="left:354.3px;top:590px;font-size:12px;line-height:12px;color:#000;letter-spacing:0.208px;">Add, edit and remove overridden system pages and user defined pages from the system.</div>
<div class="a t" style="left:329.3px;top:606px;font-size:12px;line-height:12px;color:#551a8b;letter-spacing:-0.537px;text-decoration:underline;">Panels</div>
<div class="a t" style="left:354.3px;top:622px;font-size:12px;line-height:12px;color:#000;letter-spacing:0.188px;">Administer items related to the Panels module.</div>
<div class="a" style="left:321px;top:654px;width:630px;height:1px;background:#cccccc;"></div>
<div class="a t" style="left:954.4px;top:324px;font-size:18px;line-height:18px;color:#000;font-weight:bold;letter-spacing:0.069px;">Upcoming</div>
<div class="a" style="left:964px;top:361.5px;width:5px;height:5px;border-radius:50%;background:#000;"></div>
<div class="a t" style="left:979.2px;top:358px;font-size:12px;line-height:12px;color:#551a8b;letter-spacing:0.165px;text-decoration:underline;">Sample event 2</div>
<div class="a t" style="left:979.2px;top:374px;font-size:12px;line-height:12px;color:#000;letter-spacing:0.262px;">January 20, 2010 - 12:00pm</div>
<div class="a" style="left:964px;top:393.5px;width:5px;height:5px;border-radius:50%;background:#000;"></div>
<div class="a t" style="left:979.2px;top:390px;font-size:12px;line-height:12px;color:#0000ee;letter-spacing:0.136px;text-decoration:underline;">Private Mens event</div>
<div class="a t" style="left:979.2px;top:406px;font-size:12px;line-height:12px;color:#000;letter-spacing:0.214px;">January 24, 2010 - 3:00am</div>
<div class="a" style="left:964px;top:424.5px;width:5px;height:5px;border-radius:50%;background:#000;"></div>
<div class="a t" style="left:979.2px;top:421px;font-size:12px;line-height:12px;color:#551a8b;letter-spacing:0.217px;text-decoration:underline;">Mens event 2</div>
<div class="a t" style="left:979.2px;top:437px;font-size:12px;line-height:12px;color:#000;letter-spacing:0.254px;">January 26, 2010 - 11:30am</div>
<div class="a" style="left:964px;top:456.5px;width:5px;height:5px;border-radius:50%;background:#000;"></div>
<div class="a t" style="left:979.2px;top:453px;font-size:12px;line-height:12px;color:#0000ee;letter-spacing:0.244px;text-decoration:underline;">Private church event</div>
<div class="a t" style="left:979.2px;top:469px;font-size:12px;line-height:12px;color:#000;letter-spacing:0.254px;">January 29, 2010 - 11:30am</div>
<div class="a t" style="left:954.4px;top:497px;font-size:18px;line-height:18px;color:#000;font-weight:bold;letter-spacing:0.058px;">Recent blog posts</div>
<div class="a" style="left:964px;top:535.5px;width:5px;height:5px;border-radius:50%;background:#000;"></div>
<div class="a t" style="left:979.2px;top:532px;font-size:12px;line-height:12px;color:#0000ee;letter-spacing:0.189px;text-decoration:underline;">Workflow, Actions, Triggers and Rules</div>
<div class="a" style="left:964px;top:551.5px;width:5px;height:5px;border-radius:50%;background:#000;"></div>
<div class="a t" style="left:979.2px;top:548px;font-size:12px;line-height:12px;color:#0000ee;letter-spacing:0.083px;text-decoration:underline;">Here is a draft</div>
<div class="a" style="left:964px;top:567.5px;width:5px;height:5px;border-radius:50%;background:#000;"></div>
<div class="a t" style="left:979.2px;top:564px;font-size:12px;line-height:12px;color:#0000ee;letter-spacing:0.165px;text-decoration:underline;">Setting up Backup and Migrate module</div>
<div class="a" style="left:964px;top:582.5px;width:5px;height:5px;border-radius:50%;background:#000;"></div>
<div class="a t" style="left:979.2px;top:579px;font-size:12px;line-height:12px;color:#0000ee;letter-spacing:0.131px;text-decoration:underline;">Setting up Calendar events</div>
<div class="a" style="left:964px;top:598.5px;width:5px;height:5px;border-radius:50%;background:#000;"></div>
<div class="a t" style="left:979.2px;top:595px;font-size:12px;line-height:12px;color:#6b2a7a;letter-spacing:0.080px;text-decoration:underline;">Date and Views to build a Calendar</div>
<div class="a" style="left:964px;top:614.5px;width:5px;height:5px;border-radius:50%;background:#000;"></div>
<div class="a t" style="left:979.2px;top:611px;font-size:12px;line-height:12px;color:#0000ee;letter-spacing:0.251px;text-decoration:underline;">Setting up Panels for frontpage view</div>
<div class="a" style="left:964px;top:630.5px;width:5px;height:5px;border-radius:50%;background:#000;"></div>
<div class="a t" style="left:979.2px;top:627px;font-size:12px;line-height:12px;color:#0000ee;letter-spacing:0.047px;text-decoration:underline;">Organic group setup and permissions</div>
<div class="a" style="left:964px;top:645.5px;width:5px;height:5px;border-radius:50%;background:#000;"></div>
<div class="a t" style="left:979.2px;top:642px;font-size:12px;line-height:12px;color:#0000ee;letter-spacing:0.027px;text-decoration:underline;">Necessary modules for basic functionality</div>
<div class="a t" style="left:1223.3px;top:670px;font-size:12px;line-height:12px;color:#0000ee;letter-spacing:0.052px;text-decoration:underline;">more</div>
<div class="a t" style="left:954.4px;top:699px;font-size:18px;line-height:18px;color:#000;font-weight:bold;letter-spacing:0.493px;">Recent comments</div>
<div class="a" style="left:964px;top:736.5px;width:5px;height:5px;border-radius:50%;background:#000;"></div>
<div class="a t" style="left:979.2px;top:733px;font-size:12px;line-height:12px;color:#0000ee;letter-spacing:0.223px;text-decoration:underline;white-space:pre;">Removed the Draft module</div>
<div class="a t" style="left:979.2px;top:749px;font-size:12px;line-height:12px;color:#000;letter-spacing:0.154px;">1 day 5 hours ago</div>
<div class="a" style="left:964px;top:768.5px;width:5px;height:5px;border-radius:50%;background:#000;"></div>
<div class="a t" style="left:979.2px;top:765px;font-size:12px;line-height:12px;color:#0000ee;letter-spacing:0.199px;text-decoration:underline;white-space:pre;">Draft module not saving a node</div>
<div class="a t" style="left:979.2px;top:781px;font-size:12px;line-height:12px;color:#000;letter-spacing:0.154px;">1 day 6 hours ago</div>
<div class="a" style="left:964px;top:799.5px;width:5px;height:5px;border-radius:50%;background:#000;"></div>
<div class="a t" style="left:979.2px;top:796px;font-size:12px;line-height:12px;color:#551a8b;letter-spacing:0.259px;text-decoration:underline;white-space:pre;">Thanks for setting this up</div>
<div class="a t" style="left:979.2px;top:812px;font-size:12px;line-height:12px;color:#000;letter-spacing:0.135px;">1 day 17 hours ago</div>
<div class="a" style="left:964px;top:831.5px;width:5px;height:5px;border-radius:50%;background:#000;"></div>
<div class="a t" style="left:979.2px;top:828px;font-size:12px;line-height:12px;color:#0000ee;letter-spacing:0.252px;text-decoration:underline;white-space:pre;">Add the views  or module</div>
<div class="a t" style="left:979.2px;top:844px;font-size:12px;line-height:12px;color:#000;letter-spacing:0.145px;">6 days 2 hours ago</div>
<div class="a" style="left:964px;top:862.5px;width:5px;height:5px;border-radius:50%;background:#000;"></div>
<div class="a t" style="left:979.2px;top:859px;font-size:12px;line-height:12px;color:#0000ee;letter-spacing:0.117px;text-decoration:underline;white-space:pre;">Example comment</div>
<div class="a t" style="left:979.2px;top:875px;font-size:12px;line-height:12px;color:#000;letter-spacing:0.253px;">1 week 4 hours ago</div>
<div class="a" style="left:964px;top:894.5px;width:5px;height:5px;border-radius:50%;background:#000;"></div>
<div class="a t" style="left:979.2px;top:891px;font-size:12px;line-height:12px;color:#0000ee;letter-spacing:0.031px;text-decoration:underline;white-space:pre;">Sample Comment 1</div>
<div class="a t" style="left:979.2px;top:907px;font-size:12px;line-height:12px;color:#000;letter-spacing:0.205px;">11 weeks 6 days ago</div>
<div class="a t" style="left:954.4px;top:935px;font-size:18px;line-height:18px;color:#000;font-weight:bold;letter-spacing:0.631px;">Project news</div>
<div class="a" style="left:964px;top:973.5px;width:5px;height:5px;border-radius:50%;background:#000;"></div>
<div class="a t" style="left:979.2px;top:970px;font-size:12px;line-height:12px;color:#0000ee;letter-spacing:0.176px;text-decoration:underline;">The Basics – Account management</div>
<svg class="a" style="left:1236px;top:967px;" width="15" height="15" viewBox="0 0 15 15"><rect x=".5" y=".5" width="14" height="14" fill="#0b6aa2" stroke="#000"/><text x="7.5" y="11.5" font-size="10" font-weight="bold" fill="#fff" text-anchor="middle" font-family="Liberation Sans">b</text></svg>
<div class="a t" style="left:1223.3px;top:999px;font-size:12px;line-height:12px;color:#551a8b;letter-spacing:0.052px;text-decoration:underline;">more</div>
</div>
</body></html>
